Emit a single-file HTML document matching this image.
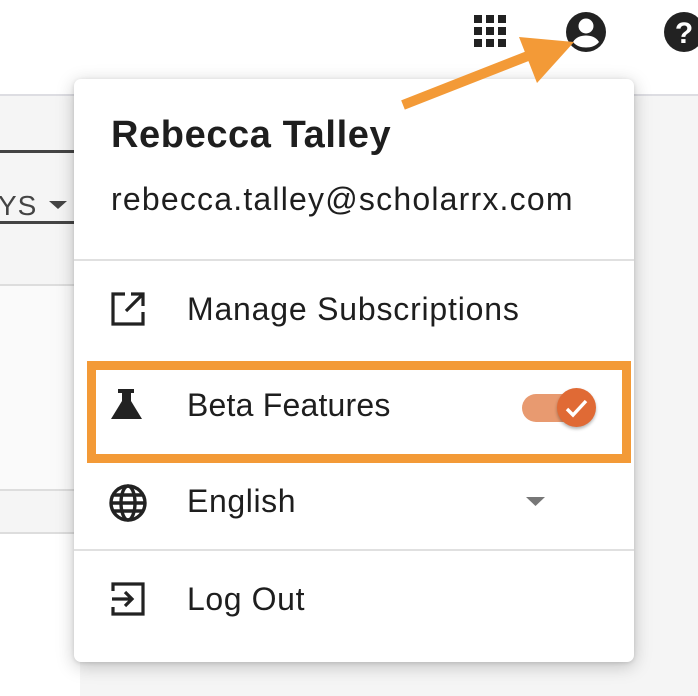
<!DOCTYPE html>
<html><head><style>
body{margin:0;width:698px;height:696px;position:relative;overflow:hidden;background:#fff;font-family:"Liberation Sans",Roboto,sans-serif;color:#1e1e1e}
.abs{position:absolute}
.menu{left:74px;top:79px;width:560px;height:583px;background:#fff;border-radius:7px;box-shadow:0 4px 18px rgba(0,0,0,.22),0 1px 4px rgba(0,0,0,.12)}
.item{position:absolute;left:113px;font-size:32px;line-height:37px;letter-spacing:.6px}
</style></head><body>
<div class="abs" style="left:0;top:94px;width:698px;height:602px;background:#f5f5f5"></div>
<div class="abs" style="left:0;top:94px;width:698px;height:2px;background:#dddde2"></div>
<div class="abs" style="left:0;top:285px;width:80px;height:205px;background:#fafafa"></div>
<div class="abs" style="left:0;top:284px;width:80px;height:2px;background:#ddd"></div>
<div class="abs" style="left:0;top:489px;width:80px;height:2px;background:#ddd"></div>
<div class="abs" style="left:0;top:532px;width:80px;height:2px;background:#ddd"></div>
<div class="abs" style="left:0;top:534px;width:80px;height:162px;background:#fff"></div>
<div class="abs" style="left:0;top:150px;width:80px;height:3px;background:#444"></div>
<div class="abs" style="left:0;top:221px;width:80px;height:3px;background:#444"></div>
<div class="abs" style="left:-2px;top:190px;font-size:28px;color:#444;letter-spacing:1px">YS</div>
<svg class="abs" style="left:49px;top:201px" width="20" height="10"><path d="M0 0h18l-9 8z" fill="#444"/></svg>
<svg class="abs" style="left:474px;top:15px" width="34" height="34" fill="#222">
<rect x="0" y="0" width="8" height="8"/><rect x="12" y="0" width="8" height="8"/><rect x="24" y="0" width="8" height="8"/>
<rect x="0" y="12" width="8" height="8"/><rect x="12" y="12" width="8" height="8"/><rect x="24" y="12" width="8" height="8"/>
<rect x="0" y="24" width="8" height="8"/><rect x="12" y="24" width="8" height="8"/><rect x="24" y="24" width="8" height="8"/></svg>
<svg class="abs" style="left:566px;top:12px" width="40" height="40"><circle cx="20" cy="20" r="20" fill="#222"/><circle cx="20" cy="14" r="7.5" fill="#fff"/><path d="M7 30c3-5 8-6.5 13-6.5s10 1.5 13 6.5c-3 4-8 5.5-13 5.5s-10-1.5-13-5.5z" fill="#fff"/></svg>
<svg class="abs" style="left:664px;top:12px" width="40" height="40"><circle cx="20" cy="20" r="20" fill="#222"/><text x="20" y="31" font-size="30" font-weight="bold" fill="#fff" text-anchor="middle" font-family="Liberation Sans">?</text></svg>
<div class="abs menu">
<div class="abs" style="left:37px;top:34px;font-size:38px;line-height:44px;font-weight:bold;letter-spacing:.6px">Rebecca Talley</div>
<div class="abs" style="left:37px;top:102px;font-size:32px;line-height:37px;letter-spacing:1.2px">rebecca.talley@scholarrx.com</div>
<div class="abs" style="left:0;top:180px;width:560px;height:2px;background:#e0e0e0"></div>
<div class="item" style="top:212px;letter-spacing:.8px">Manage Subscriptions</div>
<div class="item" style="top:308px;letter-spacing:.2px">Beta Features</div>
<div class="item" style="top:404px">English</div>
<div class="abs" style="left:0;top:470px;width:560px;height:2px;background:#e0e0e0"></div>
<div class="item" style="top:502px">Log Out</div>
<svg class="abs" style="left:36px;top:212px" width="36" height="36" fill="none" stroke="#222" stroke-width="3.2"><path d="M15 3H3v30h30V21"/><path d="M21 3h12v12M33 3L16 20"/></svg>
<svg class="abs" style="left:36px;top:308px" width="34" height="36"><path d="M8 2h16v4h-3v8l11 18H1l11-18V6H8z" fill="#222"/></svg>
<svg class="abs" style="left:34px;top:404px" width="40" height="40" fill="none" stroke="#222" stroke-width="3.4"><circle cx="20" cy="20" r="17"/><ellipse cx="20" cy="20" rx="7" ry="17"/><path d="M3 20h34M6 12h28M6 28h28"/></svg>
<svg class="abs" style="left:36px;top:502px" width="36" height="36" fill="none" stroke="#222" stroke-width="3.2"><path d="M3 10V3h30v30H3v-7"/><path d="M2 18h19M15 11l7 7-7 7"/></svg>
<svg class="abs" style="left:452px;top:418px" width="20" height="10"><path d="M0 0h19l-9.5 9z" fill="#777"/></svg>
<div class="abs" style="left:448px;top:315px;width:64px;height:28px;border-radius:14px;background:#e89a70"></div>
<div class="abs" style="left:483px;top:309px;width:39px;height:39px;border-radius:50%;background:#e06a35;box-shadow:0 2px 3px rgba(0,0,0,.3)"></div>
<svg class="abs" style="left:489px;top:316px" width="28" height="26" fill="none" stroke="#fff" stroke-width="3.4"><path d="M4 14l6 6L23 6"/></svg>
</div>
<div class="abs" style="left:87px;top:361px;width:526px;height:84px;border:9px solid #f39a37"></div>
<svg class="abs" style="left:0;top:0" width="698" height="120"><path d="M403 105L538 52" stroke="#f39a37" stroke-width="10"/><path d="M519 37L574 42L537 83z" fill="#f39a37"/></svg>
</body></html>
